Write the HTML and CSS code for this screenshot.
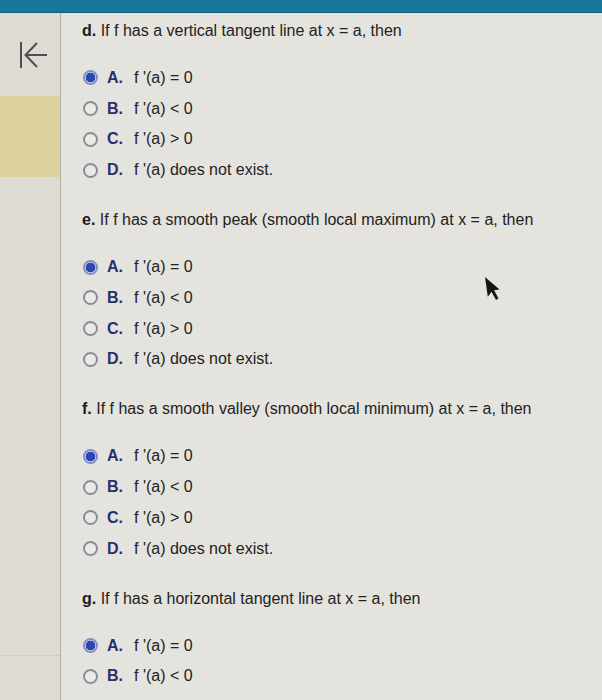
FILE: index.html
```html
<!DOCTYPE html>
<html lang="en">
<head>
<meta charset="utf-8">
<title>Derivative questions</title>
<link rel="stylesheet" href="styles.css">
</head>
<body>
<div class="topbar"></div>
<div class="layout">
  <aside class="sidebar">
    <div class="collapse">
      <svg width="60" height="83" viewBox="0 13 60 83" aria-hidden="true">
        <line x1="21" y1="42" x2="21" y2="68" stroke="#4e4e4e" stroke-width="2"/>
        <line x1="26" y1="55" x2="47" y2="55" stroke="#4e4e4e" stroke-width="2"/>
        <polyline points="37,43 25.5,55 37,67" fill="none" stroke="#4e4e4e" stroke-width="2"/>
      </svg>
    </div>
    <div class="active-item"></div>
    <div class="spacer"></div>
    <div class="rest"></div>
  </aside>
  <main class="main">
    <section class="block">
      <p class="question"><b>d.</b> If f has a vertical tangent line at x = a, then</p>
      <div class="option"><span class="radio checked"></span><span class="letter">A.</span><span class="text">f '(a) = 0</span></div>
      <div class="option"><span class="radio"></span><span class="letter">B.</span><span class="text">f '(a) &lt; 0</span></div>
      <div class="option"><span class="radio"></span><span class="letter">C.</span><span class="text">f '(a) &gt; 0</span></div>
      <div class="option"><span class="radio"></span><span class="letter">D.</span><span class="text">f '(a) does not exist.</span></div>
    </section>
    <section class="block">
      <p class="question"><b>e.</b> If f has a smooth peak (smooth local maximum) at x = a, then</p>
      <div class="option"><span class="radio checked"></span><span class="letter">A.</span><span class="text">f '(a) = 0</span></div>
      <div class="option"><span class="radio"></span><span class="letter">B.</span><span class="text">f '(a) &lt; 0</span></div>
      <div class="option"><span class="radio"></span><span class="letter">C.</span><span class="text">f '(a) &gt; 0</span></div>
      <div class="option"><span class="radio"></span><span class="letter">D.</span><span class="text">f '(a) does not exist.</span></div>
    </section>
    <section class="block">
      <p class="question"><b>f.</b> If f has a smooth valley (smooth local minimum) at x = a, then</p>
      <div class="option"><span class="radio checked"></span><span class="letter">A.</span><span class="text">f '(a) = 0</span></div>
      <div class="option"><span class="radio"></span><span class="letter">B.</span><span class="text">f '(a) &lt; 0</span></div>
      <div class="option"><span class="radio"></span><span class="letter">C.</span><span class="text">f '(a) &gt; 0</span></div>
      <div class="option"><span class="radio"></span><span class="letter">D.</span><span class="text">f '(a) does not exist.</span></div>
    </section>
    <section class="block">
      <p class="question"><b>g.</b> If f has a horizontal tangent line at x = a, then</p>
      <div class="option"><span class="radio checked"></span><span class="letter">A.</span><span class="text">f '(a) = 0</span></div>
      <div class="option"><span class="radio"></span><span class="letter">B.</span><span class="text">f '(a) &lt; 0</span></div>
      <div class="option"><span class="radio"></span><span class="letter">C.</span><span class="text">f '(a) &gt; 0</span></div>
      <div class="option"><span class="radio"></span><span class="letter">D.</span><span class="text">f '(a) does not exist.</span></div>
    </section>
  </main>
</div>
<svg class="cursor" width="22" height="32" viewBox="0 0 22 32" aria-hidden="true">
  <path d="M0,0 L0,16 L4,12.5 L7,19.5 L9.5,18.5 L6.5,11.5 L11.5,11.5 Z" fill="#151515" transform="translate(6,3) rotate(-8) scale(1.1 1.25)"/>
</svg>
</body>
</html>
```
FILE: styles.css
```css
html, body {
  margin: 0;
  padding: 0;
  height: 100%;
  overflow: hidden;
}
body {
  background: #e5e3de;
  font-family: "Liberation Sans", Arial, sans-serif;
  color: #222;
  position: relative;
}
.topbar {
  height: 12px;
  background: #17789b;
  border-bottom: 1px solid #0f5f7c;
}
.layout {
  display: flex;
  height: calc(100vh - 13px);
}
.sidebar {
  width: 60px;
  flex: 0 0 60px;
  background: #dedbd4;
  border-right: 1px solid #b4b0a9;
  display: flex;
  flex-direction: column;
}
.collapse {
  height: 83px;
}
.collapse svg {
  display: block;
}
.active-item {
  height: 81px;
  background: #ddd29e;
}
.spacer {
  height: 478px;
}
.rest {
  flex: 1;
  border-top: 1px solid #cfccc5;
}
.main {
  flex: 1;
  padding: 8px 0 0 21px;
  overflow: hidden;
}
.block {
  margin-bottom: 24.6px;
}
.question {
  margin: 0 0 21.6px 0;
  font-size: 16px;
  line-height: 20px;
  color: #222;
}
.question b {
  font-weight: bold;
  color: #1a1a20;
}
.option {
  display: flex;
  align-items: center;
  height: 30.75px;
  padding-left: 1px;
  font-size: 16px;
}
.radio {
  width: 15px;
  height: 15px;
  box-sizing: border-box;
  border: 2px solid #8c8c99;
  border-radius: 50%;
  margin-right: 9px;
  flex: 0 0 auto;
  background: #ebe9e5;
}
.radio.checked {
  border: 2px solid #7d8fc6;
  background: radial-gradient(circle, #2c47b0 0 4.6px, #e9e8ea 5.2px);
}
.letter {
  width: 27px;
  font-weight: bold;
  color: #27306a;
}
.text {
  color: #222;
}
.cursor {
  position: absolute;
  left: 479px;
  top: 274px;
}
```
